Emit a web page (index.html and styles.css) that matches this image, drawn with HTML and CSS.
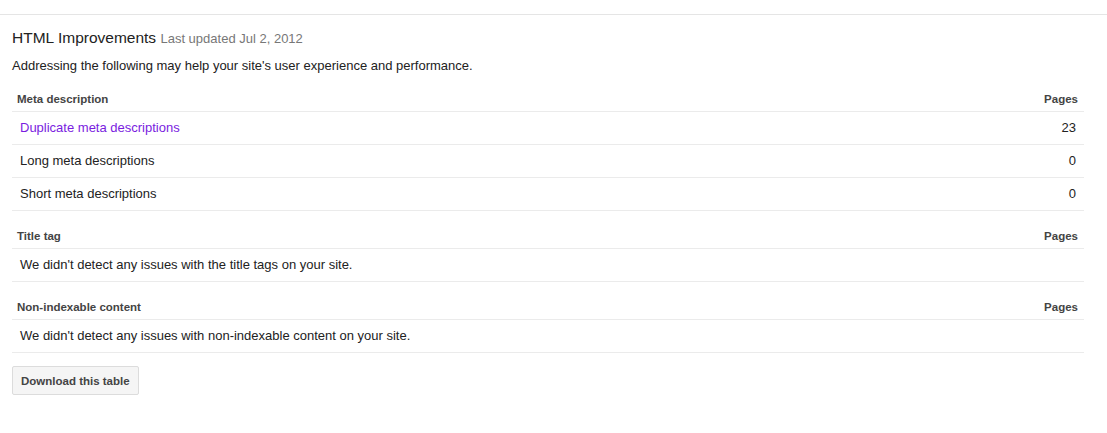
FILE: index.html
```html
<!DOCTYPE html>
<html>
<head>
<meta charset="utf-8">
<link rel="stylesheet" href="styles.css">
</head>
<body>
<div class="topbar"></div>
<div class="content">
  <h1 class="title">HTML Improvements <span class="updated">Last updated Jul 2, 2012</span></h1>
  <p class="intro">Addressing the following may help your site's user experience and performance.</p>
  <div class="table">
    <div class="head"><span>Meta description</span><span>Pages</span></div>
    <div class="row"><a class="link" href="#">Duplicate meta descriptions</a><span class="num">23</span></div>
    <div class="row"><span>Long meta descriptions</span><span class="num">0</span></div>
    <div class="row"><span>Short meta descriptions</span><span class="num">0</span></div>
    <div class="head"><span>Title tag</span><span>Pages</span></div>
    <div class="row"><span>We didn't detect any issues with the title tags on your site.</span></div>
    <div class="head"><span>Non-indexable content</span><span>Pages</span></div>
    <div class="row"><span>We didn't detect any issues with non-indexable content on your site.</span></div>
  </div>
  <button class="btn">Download this table</button>
</div>
</body>
</html>
```
FILE: styles.css
```css
html, body { margin: 0; padding: 0; background: #fff; }
body { font-family: Arial, "Liberation Sans", sans-serif; color: #222; }
.topbar { height: 14px; border-bottom: 1px solid #e5e5e5; }
.content { padding: 0 23px 0 12px; }
.title { margin: 13px 0 0; font-size: 15.5px; font-weight: normal; line-height: 20px; color: #222; }
.updated { font-size: 13px; color: #777; }
.intro { margin: 9px 0 0; font-size: 13px; line-height: 16px; color: #222; }
.table { display: flex; flex-direction: column; }
.head { display: flex; justify-content: space-between; padding: 18px 6px 5px 5px; font-size: 11.5px; font-weight: bold; line-height: 14px; color: #444; border-bottom: 1px solid #ebebeb; }
.row { display: flex; justify-content: space-between; padding: 8px 8px 8px 8px; font-size: 13px; line-height: 16px; color: #222; border-bottom: 1px solid #ebebeb; }
.link { color: #7a1ce0; text-decoration: none; }
.num { text-align: right; }
.btn { display: block; margin-top: 13px; height: 29px; padding: 0 8px; font-family: Arial, "Liberation Sans", sans-serif; font-size: 11.5px; font-weight: bold; color: #444; background: #f5f5f5; border: 1px solid #dcdcdc; border-radius: 2px; }
```
